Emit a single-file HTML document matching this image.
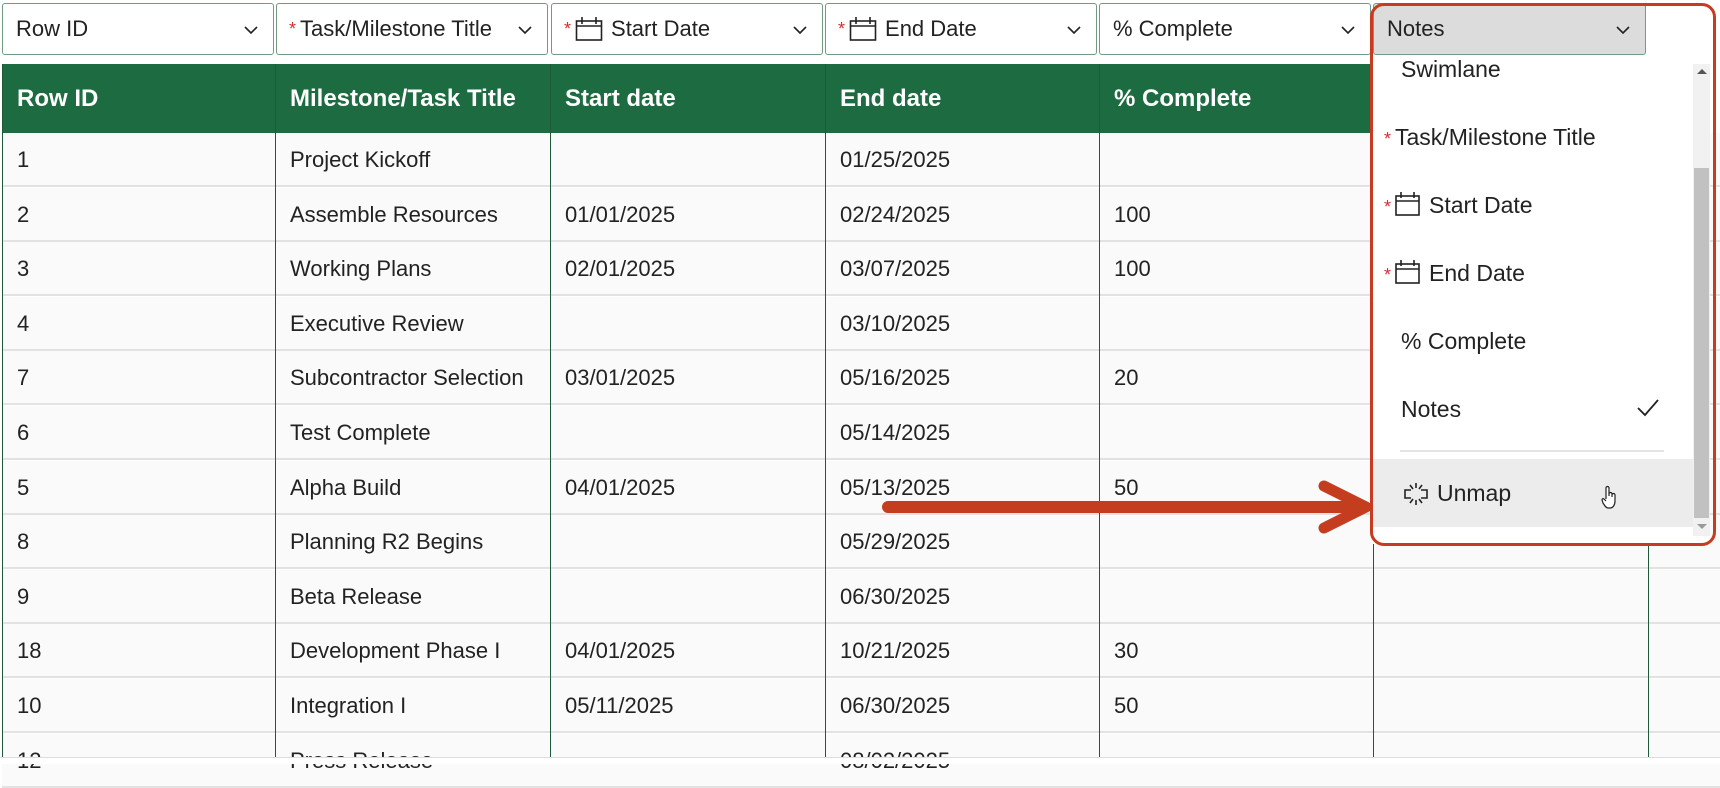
<!DOCTYPE html>
<html><head><style>
body{margin:0;width:1720px;height:763px;overflow:hidden;background:#fff;font-family:"Liberation Sans",sans-serif;position:relative}
.dd{position:absolute;top:3px;height:52px;border:1px solid #6f9c80;border-radius:3px;background:#fff;box-sizing:border-box;font-size:22px;color:#222;display:flex;align-items:center;padding-left:13px;white-space:nowrap}
.dd .ch{position:absolute;right:14px;top:18px}
.star{color:#d32f2f;margin-right:4px;font-size:18px}
.hdr{position:absolute;top:64px;left:2px;width:1646px;height:69px;background:#1c6b41}
.hc{position:absolute;top:64px;height:69px;line-height:69px;color:#fff;font-weight:bold;font-size:24px;padding-left:15px;box-sizing:border-box;white-space:nowrap}
.row{position:absolute;left:2px;width:1718px;height:54px;background:#fafafa;border-bottom:2px solid #e2e2e2;box-sizing:border-box}
.cell{position:absolute;font-size:22px;color:#222;padding-left:15px;white-space:nowrap}
.vl{position:absolute;top:64px;bottom:5px;width:1px;background:#1c5a38}
.mi{position:absolute;left:1401px;font-size:23px;color:#222;white-space:nowrap}
</style></head><body>
<div class="dd" style="left:2px;width:272px">Row ID<svg class="ch" width="16" height="16"><path d="M2 5l6 6 6-6" stroke="#222" stroke-width="1.6" fill="none"/></svg></div>
<div class="dd" style="left:276px;width:272px;padding-left:12px"><span class="star">*</span>Task/Milestone Title<svg class="ch" width="16" height="16"><path d="M2 5l6 6 6-6" stroke="#222" stroke-width="1.6" fill="none"/></svg></div>
<div class="dd" style="left:551px;width:272px;padding-left:12px"><span class="star">*</span><svg width="28" height="26" style="margin-right:8px"><rect x="1.5" y="5" width="25" height="19" fill="none" stroke="#222" stroke-width="1.6"/><path d="M1.5 10h25M7 1v7M21 1v7" stroke="#222" stroke-width="1.6"/></svg>Start Date<svg class="ch" width="16" height="16"><path d="M2 5l6 6 6-6" stroke="#222" stroke-width="1.6" fill="none"/></svg></div>
<div class="dd" style="left:825px;width:272px;padding-left:12px"><span class="star">*</span><svg width="28" height="26" style="margin-right:8px"><rect x="1.5" y="5" width="25" height="19" fill="none" stroke="#222" stroke-width="1.6"/><path d="M1.5 10h25M7 1v7M21 1v7" stroke="#222" stroke-width="1.6"/></svg>End Date<svg class="ch" width="16" height="16"><path d="M2 5l6 6 6-6" stroke="#222" stroke-width="1.6" fill="none"/></svg></div>
<div class="dd" style="left:1099px;width:272px">% Complete<svg class="ch" width="16" height="16"><path d="M2 5l6 6 6-6" stroke="#222" stroke-width="1.6" fill="none"/></svg></div>
<div class="dd" style="left:1373px;width:273px;background:#dcdcdc">Notes<svg class="ch" width="16" height="16"><path d="M2 5l6 6 6-6" stroke="#222" stroke-width="1.6" fill="none"/></svg></div>

<div class="hdr"></div>
<div class="hc" style="left:2px">Row ID</div>
<div class="hc" style="left:275px">Milestone/Task Title</div>
<div class="hc" style="left:550px">Start date</div>
<div class="hc" style="left:825px">End date</div>
<div class="hc" style="left:1099px">% Complete</div>

<div id="rows"></div>
<script>
var d=[["1","Project Kickoff","","01/25/2025",""],["2","Assemble Resources","01/01/2025","02/24/2025","100"],["3","Working Plans","02/01/2025","03/07/2025","100"],["4","Executive Review","","03/10/2025",""],["7","Subcontractor Selection","03/01/2025","05/16/2025","20"],["6","Test Complete","","05/14/2025",""],["5","Alpha Build","04/01/2025","05/13/2025","50"],["8","Planning R2 Begins","","05/29/2025",""],["9","Beta Release","","06/30/2025",""],["18","Development Phase I","04/01/2025","10/21/2025","30"],["10","Integration I","05/11/2025","06/30/2025","50"],["12","Press Release","","08/02/2025",""]];
var xs=[2,275,550,825,1099],h="";
d.forEach(function(r,i){var t=133+i*54.6;h+='<div class="row" style="top:'+t+'px"></div>';r.forEach(function(c,j){h+='<div class="cell" style="left:'+xs[j]+'px;top:'+(t+14)+'px">'+c+'</div>'})});
[2,275,550,825,1099,1373,1648].forEach(function(x){h+='<div class="vl" style="left:'+x+'px"></div>'});
document.getElementById("rows").innerHTML=h;
</script>
<div style="position:absolute;left:0;top:757px;width:1720px;height:6px;background:#fff;border-top:1px solid #ddd"></div>

<!-- menu -->
<div style="position:absolute;left:1373px;top:64px;width:337px;height:480px;background:#fff"></div>
<div style="position:absolute;left:1693px;top:64px;width:17px;height:472px;background:#f1f1f1"></div>
<div style="position:absolute;left:1694px;top:168px;width:15px;height:350px;background:#c1c1c1"></div>
<svg style="position:absolute;left:1695px;top:66px" width="14" height="10"><path d="M2 8l5-5 5 5z" fill="#555"/></svg>
<svg style="position:absolute;left:1695px;top:522px" width="14" height="10"><path d="M2 2l5 5 5-5z" fill="#999"/></svg>
<div style="position:absolute;left:1373px;top:459px;width:320px;height:68px;background:#ececec"></div>
<div style="position:absolute;left:1400px;top:450px;width:264px;height:2px;background:#e4e4e4"></div>
<div class="mi" style="top:56px">Swimlane</div>
<div class="mi" style="top:124px;left:1384px"><span class="star">*</span>Task/Milestone Title</div>
<div class="mi" style="top:192px;left:1384px"><span class="star">*</span><svg width="26" height="24" style="vertical-align:-3px;margin-right:8px"><rect x="1" y="4" width="23" height="19" fill="none" stroke="#222" stroke-width="1.6"/><path d="M1 9h23M6 0v6M19 0v6" stroke="#222" stroke-width="1.6"/></svg>Start Date</div>
<div class="mi" style="top:260px;left:1384px"><span class="star">*</span><svg width="26" height="24" style="vertical-align:-3px;margin-right:8px"><rect x="1" y="4" width="23" height="19" fill="none" stroke="#222" stroke-width="1.6"/><path d="M1 9h23M6 0v6M19 0v6" stroke="#222" stroke-width="1.6"/></svg>End Date</div>
<div class="mi" style="top:328px">% Complete</div>
<div class="mi" style="top:396px">Notes</div>
<svg style="position:absolute;left:1636px;top:398px" width="24" height="20"><path d="M2 10l7 7L22 2" stroke="#222" stroke-width="1.8" fill="none"/></svg>
<svg style="position:absolute;left:1402px;top:481px" width="28" height="26"><path d="M9 9H3v8h6M19 9h6v8h-6M14 2v5M14 19v5M8 4l3 4M20 4l-3 4M8 22l3-4M20 22l-3-4" stroke="#222" stroke-width="1.6" fill="none"/></svg>
<div class="mi" style="top:480px;left:1437px">Unmap</div>
<svg style="position:absolute;left:1600px;top:485px" width="18" height="24"><path d="M6 14V3a1.5 1.5 0 013 0v8V9a1.5 1.5 0 013 0v3-2a1.5 1.5 0 013 0v6c0 4-2 7-5 7H8c-2 0-3-2-5-5l-1-3c0-1 1-2 2-1l2 2" fill="#fff" stroke="#222" stroke-width="1.2"/></svg>
<div style="position:absolute;left:1370px;top:3px;width:346px;height:543px;border:3px solid #c63b22;border-radius:14px;box-sizing:border-box"></div>
<svg style="position:absolute;left:880px;top:480px" width="500" height="56"><path d="M8 27H480" stroke="#c43d1e" stroke-width="12" stroke-linecap="round"/><path d="M444 6l42 21-42 21" stroke="#c43d1e" stroke-width="11" fill="none" stroke-linecap="round" stroke-linejoin="round"/></svg>
</body></html>
